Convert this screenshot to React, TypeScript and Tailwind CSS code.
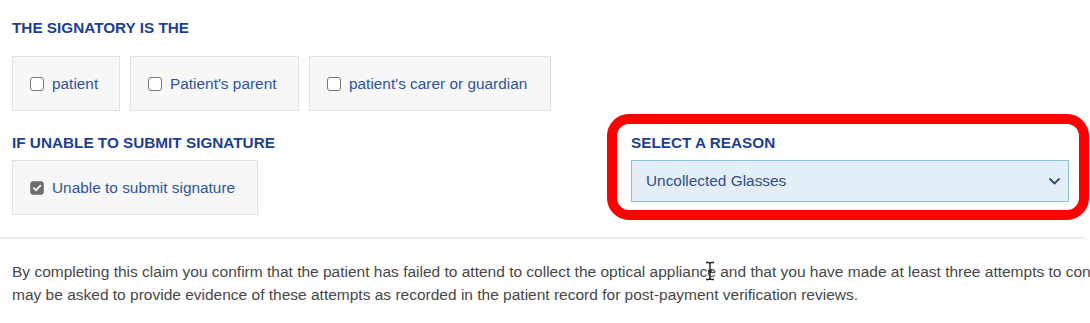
const FONT = { fontFamily: '"Liberation Sans", Arial, sans-serif' };

function Box({ checked }: { checked?: boolean }) {
  if (checked) {
    return (
      <span className="flex h-[14px] w-[14px] shrink-0 items-center justify-center rounded-[3px] border border-[#8a8a8a] bg-[#6b6b6b]">
        <svg width="10" height="10" viewBox="0 0 10 10" fill="none">
          <path d="M1.8 5.2 L4 7.4 L8.3 2.6" stroke="#fff" strokeWidth="1.8" strokeLinecap="round" strokeLinejoin="round" />
        </svg>
      </span>
    );
  }
  return <span className="h-[14px] w-[14px] shrink-0 rounded-[3px] border border-[#777] bg-white" />;
}

function Option({ label, width, checked }: { label: string; width: string; checked?: boolean }) {
  return (
    <div
      className={`flex h-[55px] items-center gap-[8px] border border-[#e2e2e2] bg-[#f7f7f7] pl-[17px] text-[15.4px] text-[#2f5596] ${width}`}
    >
      <Box checked={checked} />
      <span>{label}</span>
    </div>
  );
}

export default function App() {
  return (
    <div className="relative h-[323px] w-[1090px] overflow-hidden bg-white" style={FONT}>
      <div className="pl-[12px] pt-[18px]">
        <h2 className="text-[15.3px] font-bold leading-[20px] text-[#1d3f91]">THE SIGNATORY IS THE</h2>
        <div className="mt-[18px] flex gap-[10px]">
          <Option label="patient" width="w-[108px]" />
          <Option label="Patient's parent" width="w-[169px]" />
          <Option label="patient's carer or guardian" width="w-[242px]" />
        </div>

        <div className="mt-[22px] flex">
          <div className="w-[619px]">
            <h2 className="text-[15.3px] font-bold leading-[20px] text-[#1d3f91]">IF UNABLE TO SUBMIT SIGNATURE</h2>
            <div className="mt-[7px]">
              <Option label="Unable to submit signature" width="w-[246px]" checked />
            </div>
          </div>
          <div className="w-[438px]">
            <h2 className="text-[15.3px] font-bold leading-[20px] text-[#1d3f91]">SELECT A REASON</h2>
            <div className="mt-[7px] flex h-[42px] items-center justify-between border border-[#86c6d6] bg-[#e3eef9] pl-[14px] pr-[8px] text-[15.4px] text-[#2d4e7e]">
              <span>Uncollected Glasses</span>
              <svg width="11" height="7" viewBox="0 0 11 7" fill="none">
                <path d="M1 1 L5.5 5.5 L10 1" stroke="#2d4e7e" strokeWidth="1.8" strokeLinecap="round" strokeLinejoin="round" />
              </svg>
            </div>
          </div>
        </div>
      </div>

      <div className="mt-[22px] h-[2px] w-[1085px] bg-[#ececec]" />

      <p className="mt-[21px] whitespace-nowrap pl-[12px] text-[15.5px] leading-[23px] text-[#474747]">
        By completing this claim you confirm that the patient has failed to attend to collect the optical appliance and that you have made at least three attempts to contact the patient. You
        <br />
        may be asked to provide evidence of these attempts as recorded in the patient record for post-payment verification reviews.
      </p>

      {/* text cursor */}
      <svg className="absolute left-[704px] top-[261px]" width="12" height="20" viewBox="0 0 12 20" fill="none">
        <path d="M2 1.5 H4.5 Q6 1.5 6 3 V17 Q6 18.5 4.5 18.5 H2 M10 1.5 H7.5 Q6 1.5 6 3 M6 17 Q6 18.5 7.5 18.5 H10 M4 10 H8" stroke="#222" strokeWidth="1.4" />
      </svg>

      {/* red annotation */}
      <div className="absolute left-[607px] top-[114px] h-[106px] w-[482px] rounded-[22px] border-[10px] border-[#ff0000]" />
    </div>
  );
}
